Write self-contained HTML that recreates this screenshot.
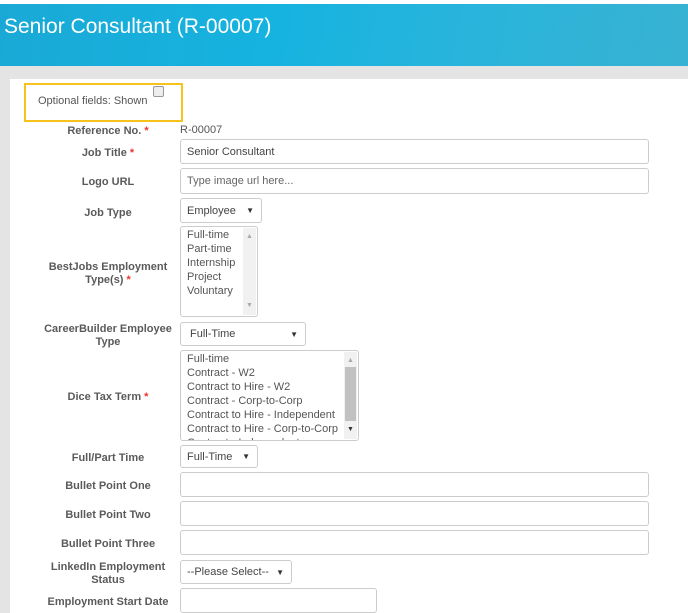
<!DOCTYPE html>
<html><head><style>
*{box-sizing:border-box;margin:0;padding:0}
body{width:688px;height:613px;overflow:hidden;background:#fff;font-family:"Liberation Sans",Arial,sans-serif;position:relative}
.hdr{position:absolute;left:0;top:4px;width:688px;height:62px;background:linear-gradient(100deg,#1aa9d6 0%,#16b3e0 40%,#2ab4db 70%,#38b2d2 100%)}
.hdr h1{position:absolute;left:4px;top:11px;color:#fff;font-weight:normal;font-size:21px}
.band{position:absolute;left:0;top:66px;width:688px;height:547px;background:#e4e4e4}
.panel{position:absolute;left:10px;top:79px;width:678px;height:534px;background:#fff}
.a{position:absolute}
.lbl{position:absolute;left:10px;width:196px;text-align:center;font-size:11px;font-weight:bold;color:#5a5a5a;line-height:13px;margin-top:2px}
.req{color:#e33}
.in{position:absolute;left:180px;border:1px solid #ccc;border-radius:3px;background:#fff;font-size:11px;color:#444;padding-left:6px;display:flex;align-items:center}
.sel .ar{position:absolute;right:7px;font-size:8px;color:#333}
.list{position:absolute;left:180px;border:1px solid #ccc;border-radius:3px;font-size:11px;color:#555;padding:1px 0 0 6px;line-height:14px;overflow:hidden}
.sb{position:absolute;right:1px;top:1px;bottom:1px;width:13px;background:#f1f1f1}
</style></head><body>
<div class="hdr"><h1>Senior Consultant (R-00007)</h1></div>
<div class="band"></div>
<div class="panel"></div>
<div class="a" style="left:24px;top:83px;width:159px;height:39px;border:2px solid #f7c21c"></div>
<div class="a" style="left:38px;top:95px;font-size:11px;color:#555">Optional fields: Shown</div>
<div class="a" style="left:153px;top:86px;width:11px;height:11px;border:1px solid #999;border-radius:2px;background:#eee"></div>

<div class="lbl" style="top:123px">Reference No. <span class="req">*</span></div>
<div class="a" style="left:180px;top:124px;font-size:11px;color:#555">R-00007</div>

<div class="lbl" style="top:145px">Job Title <span class="req">*</span></div>
<div class="in" style="top:139px;width:469px;height:25px">Senior Consultant</div>
<div class="lbl" style="top:174px">Logo URL</div>
<div class="in" style="top:168px;width:469px;height:26px;color:#666">Type image url here...</div>
<div class="lbl" style="top:205px">Job Type</div>
<div class="in sel" style="top:198px;width:82px;height:25px">Employee<span class="ar">▼</span></div>

<div class="lbl" style="top:259px">BestJobs Employment<br>Type(s) <span class="req">*</span></div>
<div class="list" style="top:226px;width:78px;height:91px">Full-time<br>Part-time<br>Internship<br>Project<br>Voluntary<div class="sb"><span style="position:absolute;top:2px;left:3px;font-size:7px;color:#aaa">▲</span><span style="position:absolute;bottom:2px;left:3px;font-size:7px;color:#aaa">▼</span></div></div>

<div class="lbl" style="top:321px">CareerBuilder Employee<br>Type</div>
<div class="in sel" style="top:322px;width:126px;height:24px;padding-left:9px">Full-Time<span class="ar">▼</span></div>

<div class="lbl" style="top:389px">Dice Tax Term <span class="req">*</span></div>
<div class="list" style="top:350px;width:179px;height:91px;color:#555">Full-time<br>Contract - W2<br>Contract to Hire - W2<br>Contract - Corp-to-Corp<br>Contract to Hire - Independent<br>Contract to Hire - Corp-to-Corp<br>Contract - Independent<div class="sb" style="background:#f1f1f1"><span style="position:absolute;top:2px;left:3px;font-size:7px;color:#aaa">▲</span><div style="position:absolute;top:15px;left:1px;width:11px;height:54px;background:#c1c1c1"></div><span style="position:absolute;bottom:2px;left:3px;font-size:7px;color:#333">▼</span></div></div>

<div class="lbl" style="top:450px">Full/Part Time</div>
<div class="in sel" style="top:445px;width:78px;height:23px">Full-Time<span class="ar">▼</span></div>
<div class="lbl" style="top:478px">Bullet Point One</div>
<div class="in" style="top:472px;width:469px;height:25px"></div>
<div class="lbl" style="top:507px">Bullet Point Two</div>
<div class="in" style="top:501px;width:469px;height:25px"></div>
<div class="lbl" style="top:536px">Bullet Point Three</div>
<div class="in" style="top:530px;width:469px;height:25px"></div>
<div class="lbl" style="top:559px">LinkedIn Employment<br>Status</div>
<div class="in sel" style="top:560px;width:112px;height:24px">--Please Select--<span class="ar">▼</span></div>
<div class="lbl" style="top:594px">Employment Start Date</div>
<div class="in" style="top:588px;width:197px;height:25px"></div>
</body></html>
